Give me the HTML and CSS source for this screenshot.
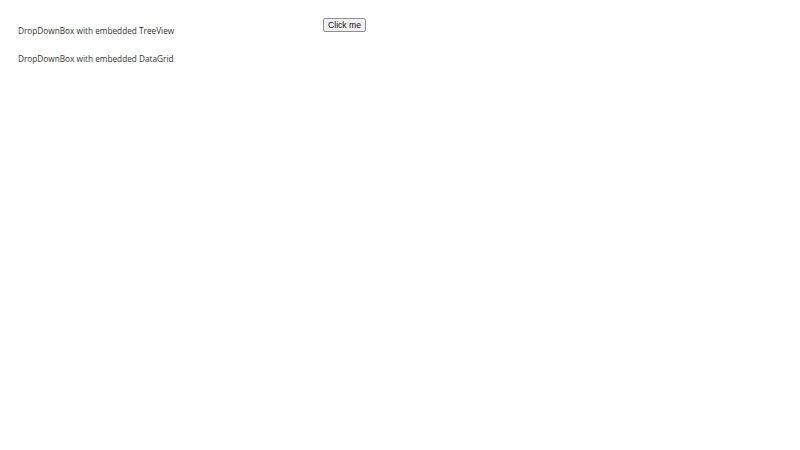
FILE: index.html
```html
<!DOCTYPE html>
<html>
<head>
<meta charset="utf-8">
<link rel="stylesheet" href="styles.css">
</head>
<body>
<div class="demo">
  <div class="field first">
    <div class="field-label">DropDownBox with embedded TreeView</div>
    <div class="field-value"><button class="btn">Click me</button></div>
  </div>
  <div class="field">
    <div class="field-label">DropDownBox with embedded DataGrid</div>
  </div>
</div>
</body>
</html>
```
FILE: styles.css
```css
html, body {
  margin: 0;
  padding: 0;
  background: #fff;
}
.demo {
  padding: 18px 0 0 18px;
  font-family: "Open Sans", "Noto Sans", sans-serif;
  color: #333;
}
.field {
  display: flex;
  align-items: flex-start;
}
.field-label {
  width: 305px;
  font-size: 8.25px;
  line-height: 14px;
  padding-top: 6px;
  white-space: nowrap;
}
.field + .field {
  margin-top: 8px;
}
.field-value {
  display: flex;
}
.btn {
  font-family: "Liberation Sans", Arial, sans-serif;
  font-size: 8.6px;
  line-height: 12px;
  padding: 0;
  margin: 0;
  height: 14px;
  width: 43px;
  white-space: nowrap;
  color: #111;
  background: #f0f0f0;
  border: 1px solid #8f8f8f;
  border-radius: 2px;
}
```
